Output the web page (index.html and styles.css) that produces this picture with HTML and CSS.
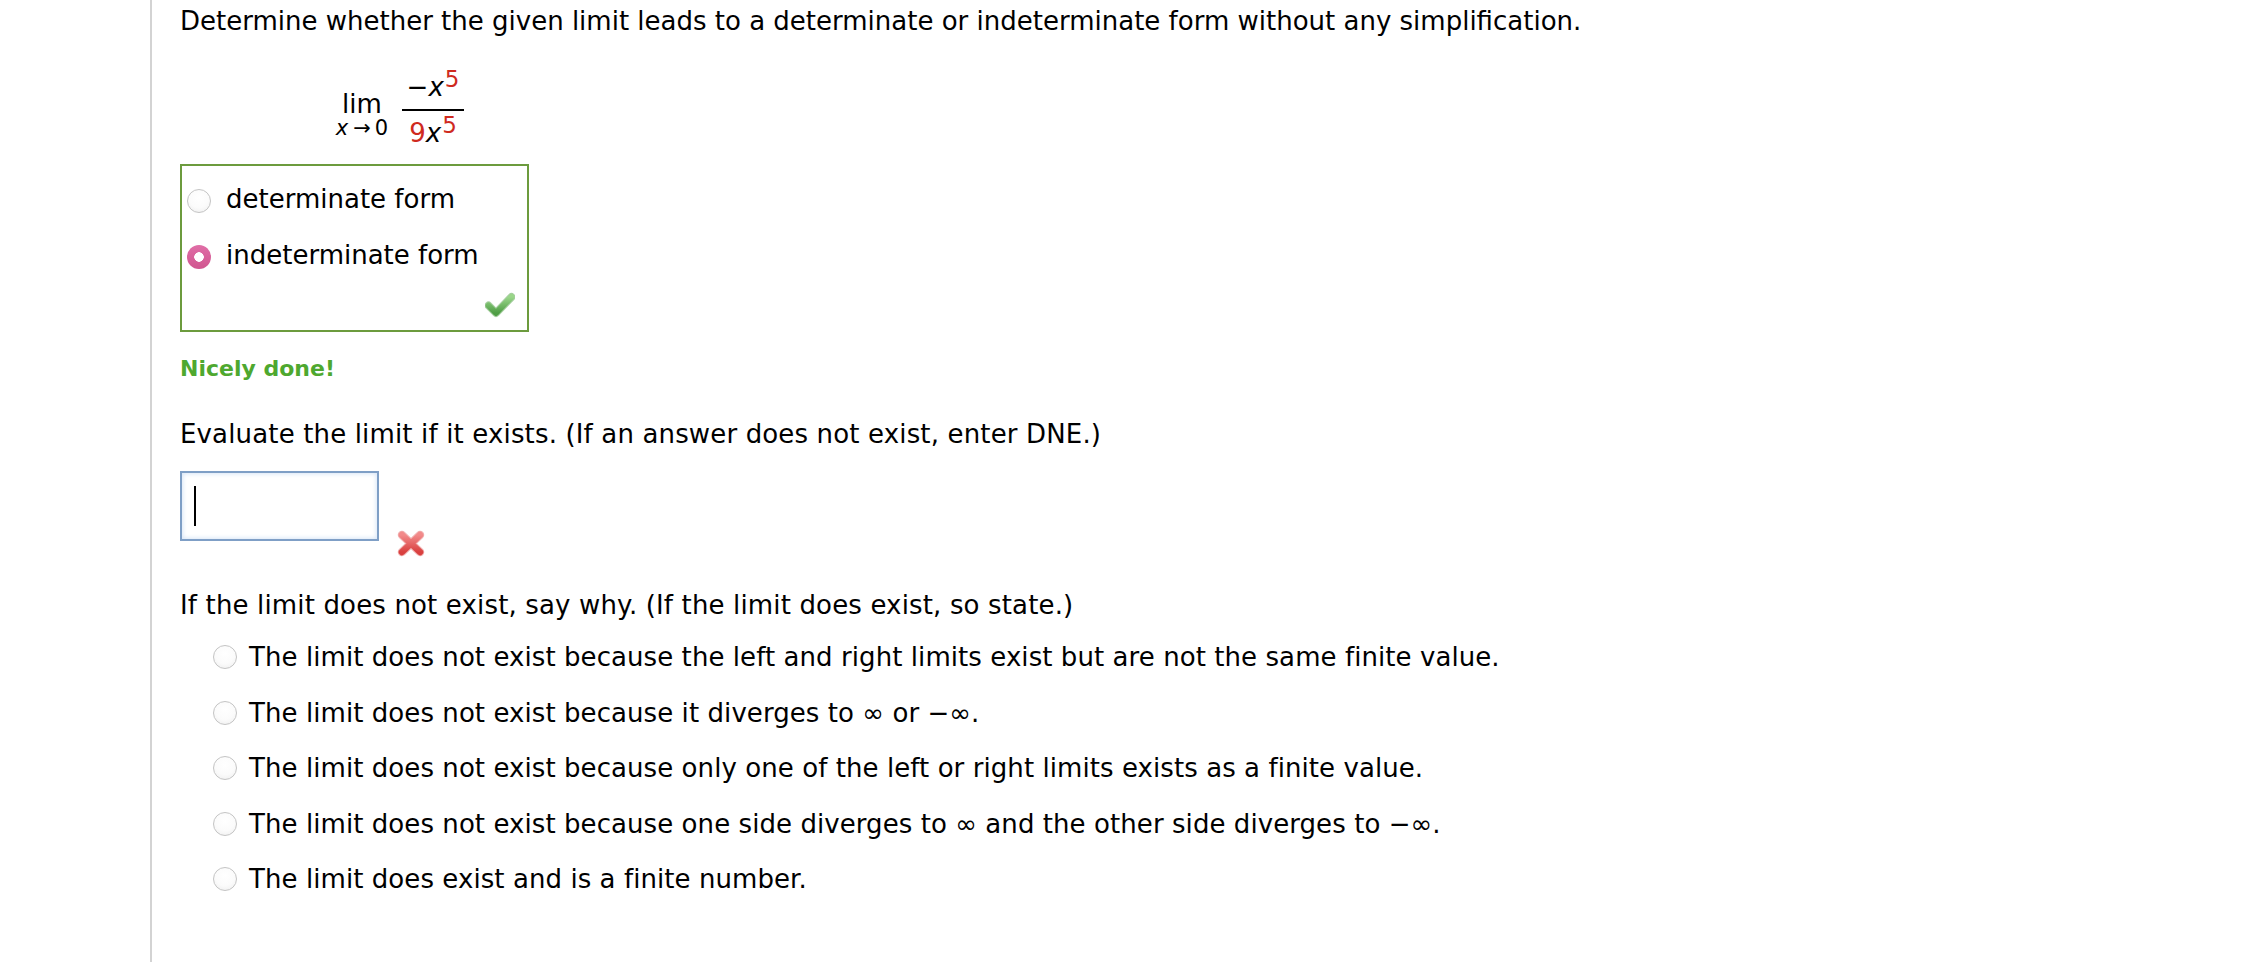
FILE: index.html
```html
<!DOCTYPE html>
<html lang="en">
<head>
<meta charset="utf-8">
<title>Limit question</title>
<link rel="stylesheet" href="styles.css">
</head>
<body>
<div class="page">
  <div class="gutter"></div>
  <main class="content">
    <p class="q title">Determine whether the given limit leads to a determinate or indeterminate form without any simplification.</p>

    <div class="limit">
      <div class="lim-col">
        <span class="lim">lim</span>
        <span class="sub"><i>x</i><span class="arrow">→</span>0</span>
      </div>
      <div class="frac">
        <span class="num">−<i>x</i><sup class="red">5</sup></span>
        <span class="bar"></span>
        <span class="den"><span class="red">9</span><i>x</i><sup class="red">5</sup></span>
      </div>
    </div>

    <div class="choicebox">
      <label class="brow"><span class="radio"></span><span class="txt">determinate form</span></label>
      <label class="brow"><span class="radio checked"></span><span class="txt">indeterminate form</span></label>
      <svg class="check" width="30" height="26" viewBox="0 0 30 26" aria-hidden="true">
        <defs>
          <linearGradient id="cg" x1="0" y1="0" x2="0" y2="1">
            <stop offset="0" stop-color="#9ad68a"/>
            <stop offset="1" stop-color="#4f9e45"/>
          </linearGradient>
        </defs>
        <polyline points="3.5,13.5 11,21 26.5,5" fill="none" stroke="#5ea854" stroke-width="8" stroke-linejoin="round" stroke-linecap="round" opacity="0.55"/>
        <polyline points="3.5,13.5 11,21 26.5,5" fill="none" stroke="url(#cg)" stroke-width="6" stroke-linejoin="round" stroke-linecap="round"/>
      </svg>
    </div>

    <p class="nice">Nicely done!</p>

    <p class="q eval">Evaluate the limit if it exists. (If an answer does not exist, enter DNE.)</p>

    <div class="answer-row">
      <div class="input"><span class="caret"></span></div>
      <svg class="cross" width="28" height="27" viewBox="0 0 28 27" aria-hidden="true">
        <defs>
          <linearGradient id="xg" x1="0" y1="0" x2="0" y2="1">
            <stop offset="0" stop-color="#f28a8a"/>
            <stop offset="1" stop-color="#d9403f"/>
          </linearGradient>
        </defs>
        <g fill="none" stroke-linecap="round">
          <path d="M5 5 L23 22 M23 5 L5 22" stroke="#e05555" stroke-width="8.5" opacity="0.45"/>
          <path d="M5 5 L23 22 M23 5 L5 22" stroke="url(#xg)" stroke-width="6.5"/>
        </g>
      </svg>
    </div>

    <p class="q why">If the limit does not exist, say why. (If the limit does exist, so state.)</p>

    <div class="options">
      <label class="orow"><span class="radio"></span><span>The limit does not exist because the left and right limits exist but are not the same finite value.</span></label>
      <label class="orow"><span class="radio"></span><span>The limit does not exist because it diverges to ∞ or −∞.</span></label>
      <label class="orow"><span class="radio"></span><span>The limit does not exist because only one of the left or right limits exists as a finite value.</span></label>
      <label class="orow"><span class="radio"></span><span>The limit does not exist because one side diverges to ∞ and the other side diverges to −∞.</span></label>
      <label class="orow"><span class="radio"></span><span>The limit does exist and is a finite number.</span></label>
    </div>
  </main>
</div>
</body>
</html>
```

FILE: styles.css
```css
html, body {
  margin: 0;
  padding: 0;
  background: #ffffff;
}

body {
  font-family: "DejaVu Sans", Verdana, sans-serif;
  font-size: 26px;
  color: #000000;
}

.page {
  display: flex;
  min-height: 100vh;
}

.gutter {
  width: 150px;
  flex: 0 0 150px;
  border-right: 2px solid #d3d3d3;
}

.content {
  padding: 5px 0 0 28px;
  flex: 1;
}

.q {
  margin: 0;
  line-height: 32px;
  white-space: nowrap;
}

.eval, .why {
  letter-spacing: 0.15px;
}

.orow {
  letter-spacing: 0.07px;
}

/* limit expression */
.limit {
  display: flex;
  align-items: flex-start;
  margin: 37px 0 0 151px;
}

.lim-col {
  display: flex;
  flex-direction: column;
  align-items: center;
  margin-top: 17px;
  width: 62px;
}

.lim {
  line-height: 26px;
}

.sub {
  font-size: 21px;
  line-height: 23px;
  white-space: nowrap;
}

.arrow {
  margin: 0 4px 0 5px;
}

.frac {
  display: flex;
  flex-direction: column;
  align-items: center;
  width: 62px;
  margin-left: 9px;
}

.num, .den {
  line-height: 26px;
  white-space: nowrap;
}

.bar {
  display: block;
  width: 62px;
  height: 2px;
  background: #000;
  margin: 9px 0 9px;
}

.frac sup {
  font-size: 23px;
  line-height: 0;
  vertical-align: 9px;
  margin-left: 1px;
}

.red {
  color: #cf2a1e;
}

/* first choice box */
.choicebox {
  position: relative;
  box-sizing: border-box;
  width: 349px;
  margin-top: 18px;
  border: 2px solid #6c9b3e;
  padding: 15px 0 53px 5px;
  display: flex;
  flex-direction: column;
  gap: 16px;
}

.brow, .orow {
  display: flex;
  align-items: center;
  height: 40px;
  line-height: 32px;
  white-space: nowrap;
}

.brow {
  gap: 15px;
}

.brow .txt {
  margin-bottom: 5px;
}

.radio {
  box-sizing: border-box;
  display: block;
  flex: 0 0 24px;
  width: 24px;
  height: 24px;
  border-radius: 50%;
  border: 1px solid #c4c4c4;
  background: radial-gradient(circle at 50% 35%, #ffffff 0%, #fbfbfb 55%, #ececec 100%);
}

.radio.checked {
  border: none;
  background: radial-gradient(circle, #ffffff 0 4.5px, transparent 5px),
              linear-gradient(#e06ea7, #d0568f);
}

.check {
  position: absolute;
  right: 12px;
  bottom: 12px;
}

.nice {
  margin: 21px 0 0;
  font-size: 22px;
  font-weight: bold;
  line-height: 32px;
  color: #4ea82f;
}

.eval {
  margin-top: 33px;
}

/* answer input */
.answer-row {
  display: flex;
  align-items: flex-start;
  margin-top: 21px;
}

.input {
  box-sizing: border-box;
  width: 199px;
  height: 70px;
  border: 2px solid #7f9fc6;
  box-shadow: inset 0 0 4px 1px #d8e6f7;
  background: #ffffff;
  padding: 13px 0 0 12px;
}

.caret {
  display: block;
  width: 2px;
  height: 40px;
  background: #000;
}

.cross {
  margin: 59px 0 0 18px;
}

.why {
  margin-top: 32px;
}

/* reason options */
.options {
  display: flex;
  flex-direction: column;
  gap: 15.5px;
  margin: 16px 0 0 33px;
}

.orow {
  gap: 12px;
}
```
